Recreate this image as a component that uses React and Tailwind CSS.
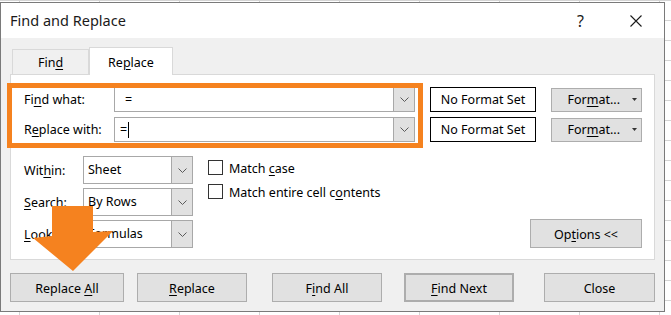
import React from 'react'

const font = { fontFamily: '"Noto Sans", "Open Sans", sans-serif' }

function U({ children }) {
  return <span className="underline underline-offset-[2px] decoration-[1px]">{children}</span>
}

function Chevron() {
  return (
    <svg width="9" height="5" viewBox="0 0 9 5" className="block">
      <path d="M0.5 0.5 L4.5 4.5 L8.5 0.5" fill="none" stroke="#5a5a5a" strokeWidth="1" />
    </svg>
  )
}

function ComboInput({ children }) {
  return (
    <div className="flex h-[25px] w-[301px] border border-[#a8a8a8] bg-white">
      <div className="flex flex-1 items-center pt-[1px] text-[12.5px] text-black">{children}</div>
      <div className="flex w-[21px] items-center justify-center border-l border-[#a8a8a8] bg-[#e1e1e1]">
        <Chevron />
      </div>
    </div>
  )
}

function Select({ value }) {
  return (
    <div className="flex h-[28px] w-[110px] border border-[#a8a8a8] bg-white">
      <div className="flex flex-1 items-center pl-[4px] pt-[1px] text-[12.5px] text-black">{value}</div>
      <div className="flex w-[21px] items-center justify-center border-l border-[#a8a8a8] bg-[#e1e1e1]">
        <Chevron />
      </div>
    </div>
  )
}

function FormatButton() {
  return (
    <div className="flex h-[24px] w-[91px] items-center justify-end border border-[#adadad] bg-[#e1e1e1] pr-[4px] text-[12.5px] text-black">
      <span className="pt-[1px]">
        For<U>m</U>at...
      </span>
      <svg width="5" height="3" viewBox="0 0 5 3" className="ml-[12px] block">
        <path d="M0 0 L5 0 L2.5 3 Z" fill="#333" />
      </svg>
    </div>
  )
}

function Btn({ children, className = '' }) {
  return (
    <div
      className={`flex h-[29px] items-center justify-center border border-[#adadad] bg-[#e1e1e1] pt-[3px] text-[12.5px] text-black ${className}`}
    >
      <span>{children}</span>
    </div>
  )
}

function Checkbox({ children }) {
  return (
    <div className="flex h-[15px] items-center">
      <div className="h-[15px] w-[15px] border border-[#333] bg-white" />
      <span className="ml-[6px] pt-[3px] text-[12.5px] text-black">{children}</span>
    </div>
  )
}

function NoFormat() {
  return (
    <div className="ml-[15px] flex h-[25px] w-[106px] items-center justify-center border border-black bg-white pt-[1px] text-[12.5px] text-black">
      No Format Set
    </div>
  )
}

function Label({ children, className }) {
  return <div className={`pt-[2px] text-[12.5px] text-black ${className}`}>{children}</div>
}

export default function App() {
  return (
    <div className="relative h-[315px] w-[671px] overflow-hidden bg-white pt-[2px]" style={font}>
      <div className="absolute inset-0 [background-image:linear-gradient(to_right,#d4d4d4_1px,transparent_1px),linear-gradient(to_bottom,#d4d4d4_1px,transparent_1px)] [background-size:80px_20px] [background-position:19px_0px]" />

      <div className="relative flex h-[310px] w-[665px] flex-col border border-[#7a7a7a] bg-[#f0f0f0]">
        <div className="flex h-[35px] items-center bg-white pl-[9px] pr-[22px] text-[14.5px] text-[#1a1a1a]">
          <span className="flex-1">Find and Replace</span>
          <span className="mr-[46px] text-[16px]">?</span>
          <svg width="12" height="12" viewBox="0 0 12 12" className="block">
            <path d="M0.5 0.5 L11.5 11.5 M11.5 0.5 L0.5 11.5" stroke="#1a1a1a" strokeWidth="1.1" />
          </svg>
        </div>

        <div className="flex flex-col pl-[9px] pt-[9px]">
          <div className="flex h-[27px] items-end">
            <div className="ml-[2px] flex h-[25px] w-[77px] items-center justify-center border border-b-0 border-[#d9d9d9] pt-[3px] text-[12.5px] text-black">
              <span>
                Fin<U>d</U>
              </span>
            </div>
            <div className="relative z-10 -mb-px flex h-[28px] w-[84px] items-center justify-center border border-b-0 border-[#d9d9d9] bg-white pt-[3px] text-[12.5px] text-black">
              <span>
                Re<U>p</U>lace
              </span>
            </div>
          </div>

          <div className="flex h-[186px] w-[645px] flex-col border border-[#d9d9d9] bg-white pl-[13px] pt-[12px]">
            <div className="flex items-center">
              <Label className="w-[90px]">
                Fi<U>n</U>d what:
              </Label>
              <ComboInput>
                <span className="pl-[10px]">=</span>
              </ComboInput>
              <NoFormat />
              <div className="ml-[15px]">
                <FormatButton />
              </div>
            </div>
            <div className="mt-[5px] flex items-center">
              <Label className="w-[90px]">
                R<U>e</U>place with:
              </Label>
              <ComboInput>
                <span className="pl-[5px]">=</span>
                <span className="ml-[1px] h-[16px] w-[1px] bg-black" />
              </ComboInput>
              <NoFormat />
              <div className="ml-[15px]">
                <FormatButton />
              </div>
            </div>

            <div className="mt-[14px] flex">
              <div className="flex flex-col gap-[4px]">
                <div className="flex items-center">
                  <Label className="w-[59px]">
                    Wit<U>h</U>in:
                  </Label>
                  <Select value="Sheet" />
                </div>
                <div className="flex items-center">
                  <Label className="w-[59px]">
                    <U>S</U>earch:
                  </Label>
                  <Select value="By Rows" />
                </div>
                <div className="flex items-center">
                  <Label className="w-[59px]">
                    <U>L</U>ook in:
                  </Label>
                  <Select value="Formulas" />
                </div>
              </div>
              <div className="ml-[15px] flex flex-col gap-[9px] pt-[4px]">
                <Checkbox>
                  Match <U>c</U>ase
                </Checkbox>
                <Checkbox>
                  Match entire cell c<U>o</U>ntents
                </Checkbox>
              </div>
              <div className="ml-auto mr-[12px] flex flex-col justify-end">
                <Btn className="h-[28px] w-[112px]">
                  Op<U>t</U>ions &lt;&lt;
                </Btn>
              </div>
            </div>
          </div>

          <div className="mt-[13px] flex">
            <Btn className="w-[114px]">
              Replace <U>A</U>ll
            </Btn>
            <Btn className="ml-[13px] w-[110px]">
              <U>R</U>eplace
            </Btn>
            <Btn className="ml-[25px] w-[110px]">
              F<U>i</U>nd All
            </Btn>
            <Btn className="ml-[22px] w-[110px] border-2 border-[#0078d7]">
              <U>F</U>ind Next
            </Btn>
            <Btn className="ml-[30px] w-[111px]">Close</Btn>
          </div>
        </div>
      </div>

      <div className="absolute left-[7px] top-[83px] h-[65px] w-[416px] border-[5px] border-[#f5821f]" />
      <svg className="absolute left-0 top-0" width="671" height="315" viewBox="0 0 671 315">
        <polygon points="52,206 93,206 93,232 113,231 73,271 33,238 52,236" fill="#f5821f" />
      </svg>
    </div>
  )
}
